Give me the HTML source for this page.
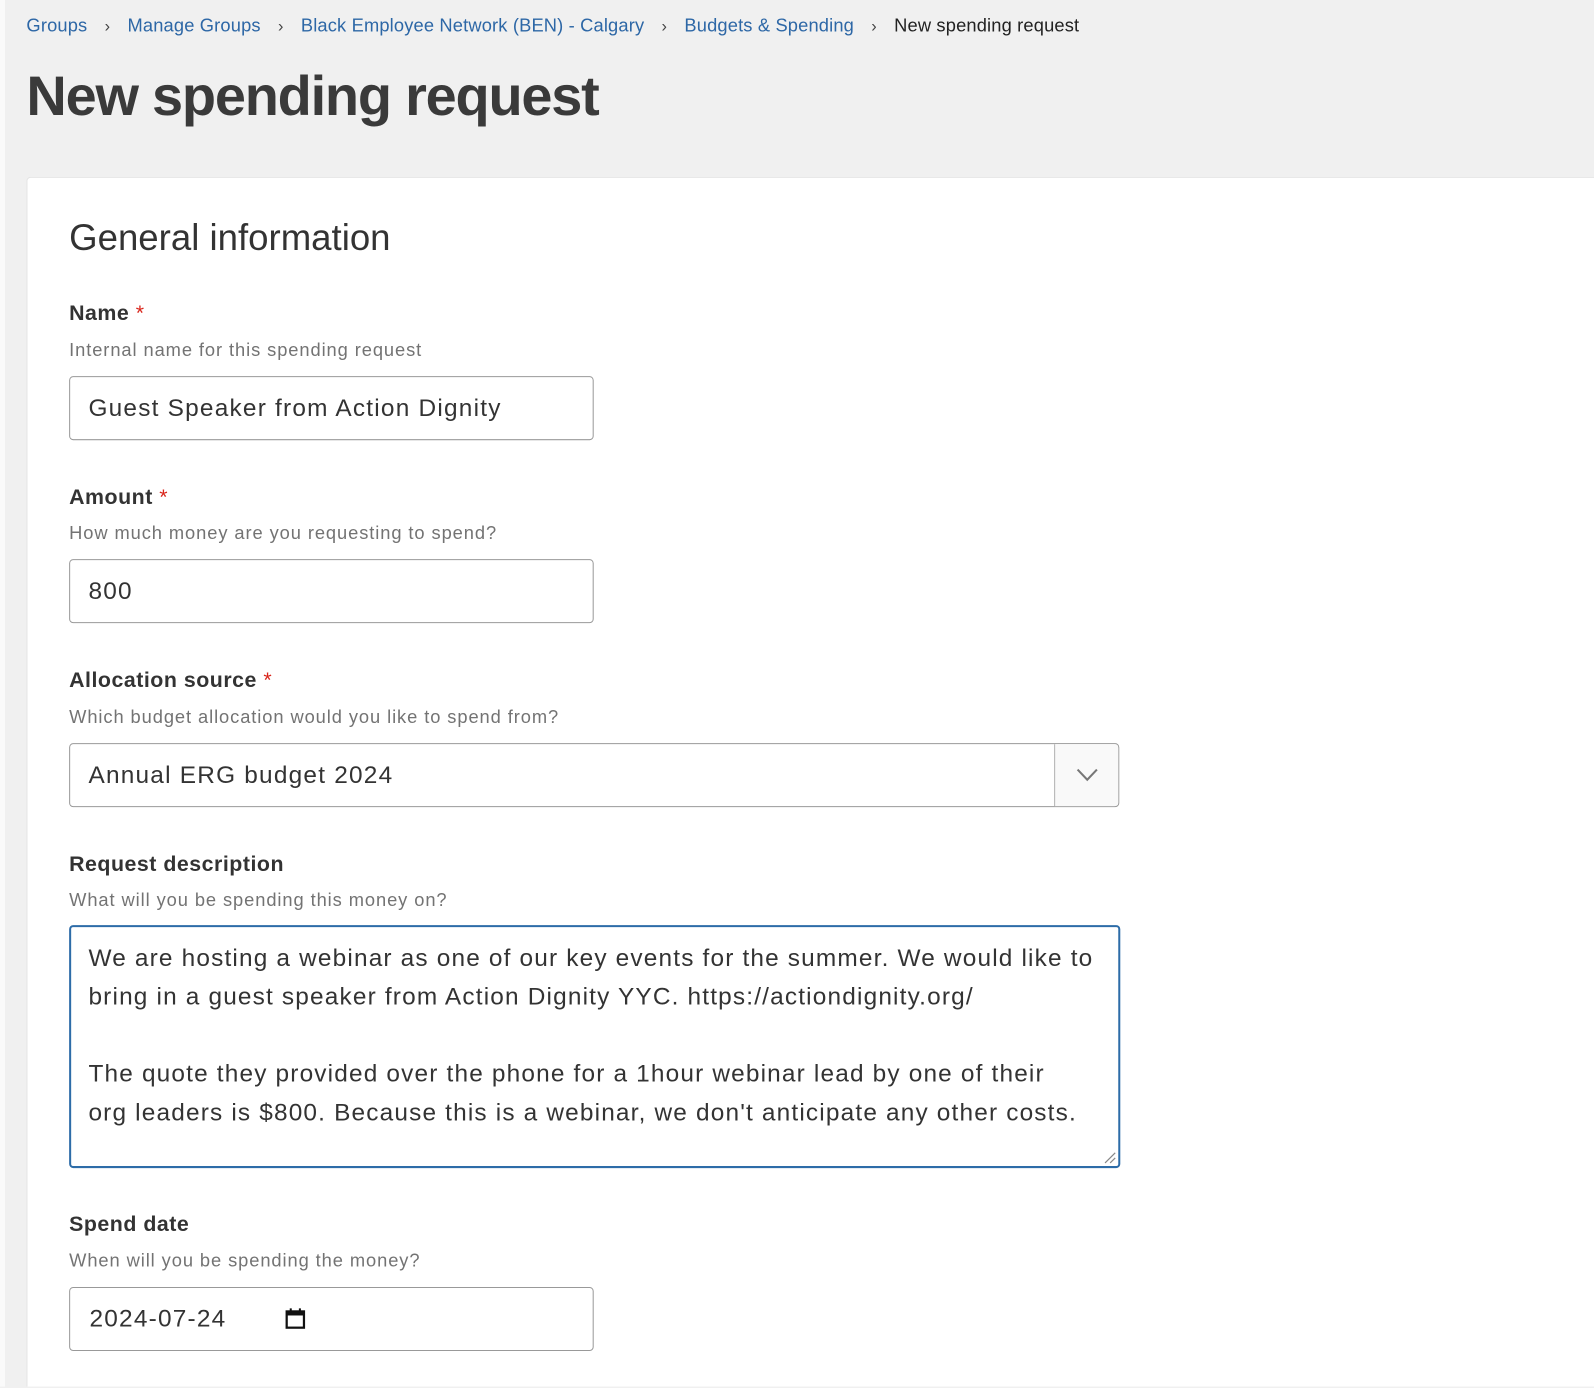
<!DOCTYPE html>
<html><head><meta charset="utf-8"><style>
*{margin:0;padding:0;box-sizing:border-box}
html,body{width:1594px;height:1388px;overflow:hidden;background:#f0f0f0;font-family:"Liberation Sans",sans-serif;color:#333}
#w{position:absolute;left:0;top:0;width:1568px;height:1364px;transform:scale(1.0166);transform-origin:0 0;overflow:hidden}
.strip{position:absolute;left:0;top:0;width:5px;height:1364px;background:#fafafa}
.a{position:absolute;white-space:nowrap}
.bc{top:15px;left:26px;font-size:18px;color:#2d67a6;letter-spacing:0.15px}
.bc .s{color:#444;margin:0 17px;font-size:16px}
.bc .c{color:#222}
.title{top:62px;left:26px;font-size:55px;font-weight:bold;color:#3a3a3a;letter-spacing:-1.2px}
.card{position:absolute;left:26px;top:174px;width:1542px;height:1190px;background:#fff;border:1px solid #e4e4e4;border-right:0;border-bottom:0;border-radius:4px 0 0 0}
.h2{left:68px;top:213px;font-size:36px;color:#333}
.lab{left:68px;font-size:21px;font-weight:bold;color:#333;letter-spacing:0.5px}
.lab b{color:#d9261c;font-weight:normal}
.help{left:68px;font-size:18px;color:#737373;letter-spacing:0.9px}
.inp{position:absolute;left:68px;width:516px;height:63px;border:1px solid #999;border-radius:4px;background:#fff;font-size:24px;color:#333;padding:0 18px;line-height:61px;letter-spacing:1.2px}
.sel{width:1033px}
.sel .btn{position:absolute;right:0;top:0;width:63px;height:61px;border-left:1px solid #999;background:#f9f9f9;border-radius:0 4px 4px 0}
.ta{position:absolute;left:68px;top:910px;width:1034px;height:239px;border:2px solid #2d6ca8;border-radius:4px;background:#fff;font-size:24px;color:#333;padding:12px 17px;line-height:38px;white-space:pre;letter-spacing:1.15px}
</style></head><body>
<div id="w">
<div class="strip"></div>
<div class="a bc">Groups<span class="s">›</span>Manage Groups<span class="s">›</span>Black Employee Network (BEN) - Calgary<span class="s">›</span>Budgets &amp; Spending<span class="s">›</span><span class="c">New spending request</span></div>
<div class="a title">New spending request</div>
<div class="card"></div>
<div class="a h2">General information</div>

<div class="a lab" style="top:297px">Name <b>*</b></div>
<div class="a help" style="top:334px">Internal name for this spending request</div>
<div class="inp" style="top:370px">Guest Speaker from Action Dignity</div>

<div class="a lab" style="top:478px">Amount <b>*</b></div>
<div class="a help" style="top:514px">How much money are you requesting to spend?</div>
<div class="inp" style="top:550px">800</div>

<div class="a lab" style="top:658px">Allocation source <b>*</b></div>
<div class="a help" style="top:695px">Which budget allocation would you like to spend from?</div>
<div class="inp sel" style="top:731px">Annual ERG budget 2024<div class="btn"><svg width="63" height="61"><path d="M22 25 L31.5 35 L41 25" fill="none" stroke="#777" stroke-width="2"/></svg></div></div>

<div class="a lab" style="top:839px">Request description</div>
<div class="a help" style="top:875px">What will you be spending this money on?</div>
<div class="ta">We are hosting a webinar as one of our key events for the summer. We would like to
bring in a guest speaker from Action Dignity YYC. https://actiondignity.org/

The quote they provided over the phone for a 1hour webinar lead by one of their
org leaders is $800. Because this is a webinar, we don't anticipate any other costs.<svg style="position:absolute;right:2px;bottom:2px" width="14" height="14"><path d="M3 13 L13 3 M8 13 L13 8" stroke="#888" stroke-width="1.2"/></svg></div>

<div class="a lab" style="top:1193px">Spend date</div>
<div class="a help" style="top:1230px">When will you be spending the money?</div>
<div class="inp" style="top:1266px;padding-left:19px">2024-07-24<svg style="position:absolute;left:211px;top:19px" width="22" height="22"><rect x="2" y="4" width="17" height="16" fill="none" stroke="#111" stroke-width="2.2"/><rect x="2" y="4" width="17" height="4" fill="#111"/><rect x="5" y="1" width="2" height="4" fill="#111"/><rect x="14" y="1" width="2" height="4" fill="#111"/></svg></div>
</div>
</body></html>
